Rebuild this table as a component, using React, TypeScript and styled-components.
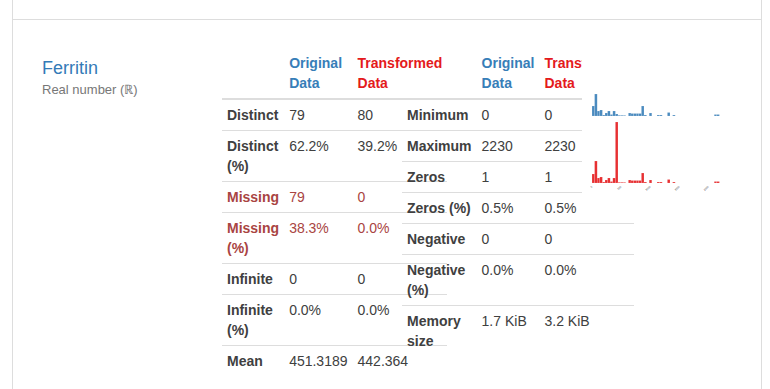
import React from "react";
import styled, { createGlobalStyle } from "styled-components";

const GlobalStyle = createGlobalStyle`
  html, body {
    margin: 0;
    padding: 0;
    background: #fff;
  }
  body {
    font-family: "Liberation Sans", Arial, Helvetica, sans-serif;
    font-size: 14px;
    line-height: 1.42857;
    color: #333;
  }
`;

const BLUE = "#377eb8";
const RED = "#e41a1c";
const TEXT = "#404040";

const Card = styled.div`
  margin-left: 12px;
  width: 750px;
  box-sizing: border-box;
  min-height: 100vh;
  border-left: 1px solid #ddd;
  border-right: 1px solid #ddd;
`;

const PrevItem = styled.div`
  height: 19px;
  border-bottom: 1px solid #ddd;
`;

const VariableRow = styled.div`
  display: flex;
  align-items: flex-start;
  padding-top: 28px;
  padding-bottom: 12px;
`;

const NameCol = styled.div`
  flex: none;
  width: 209px;
  box-sizing: border-box;
  padding-left: 29px;
`;

const VarName = styled.h4`
  margin: 10px 0 0;
  font-size: 18px;
  line-height: 20px;
  font-weight: 400;
  color: #337ab7;
`;

const VarType = styled.small`
  display: block;
  margin-top: 3px;
  font-size: 13px;
  line-height: 17px;
  color: #777;
`;

const TableCol = styled.div`
  flex: none;
  width: 180px;
  min-width: 0;
`;

const StatTable = styled.table`
  width: 100%;
  border-collapse: collapse;
  border-spacing: 0;
  font-size: 14px;
  line-height: 20px;
`;

const HeadCell = styled.th<{ $color?: string }>`
  padding: 5px;
  text-align: left;
  vertical-align: bottom;
  font-weight: 700;
  color: ${(p) => p.$color ?? TEXT};
  border-bottom: 2px solid #ddd;
`;

const Row = styled.tr<{ $alert?: boolean }>`
  color: ${(p) => (p.$alert ? "#a94442" : TEXT)};
  & > th,
  & > td {
    border-top: 1px solid #ddd;
  }
  &:first-child > th,
  &:first-child > td {
    border-top: 0;
  }
`;

const Label = styled.th`
  padding: 5px;
  text-align: left;
  vertical-align: top;
  font-weight: 700;
`;

const Value = styled.td`
  padding: 5px;
  text-align: left;
  vertical-align: top;
  white-space: nowrap;
`;

const ChartCol = styled.div`
  position: relative;
  flex: none;
  width: 165px;
  height: 148px;
  background: #fff;
`;

type StatRow = { label: string; a: string; b: string; alert?: boolean };

const leftRows: StatRow[] = [
  { label: "Distinct", a: "79", b: "80" },
  { label: "Distinct (%)", a: "62.2%", b: "39.2%" },
  { label: "Missing", a: "79", b: "0", alert: true },
  { label: "Missing (%)", a: "38.3%", b: "0.0%", alert: true },
  { label: "Infinite", a: "0", b: "0" },
  { label: "Infinite (%)", a: "0.0%", b: "0.0%" },
  { label: "Mean", a: "451.3189", b: "442.364" },
];

const rightRows: StatRow[] = [
  { label: "Minimum", a: "0", b: "0" },
  { label: "Maximum", a: "2230", b: "2230" },
  { label: "Zeros", a: "1", b: "1" },
  { label: "Zeros (%)", a: "0.5%", b: "0.5%" },
  { label: "Negative", a: "0", b: "0" },
  { label: "Negative (%)", a: "0.0%", b: "0.0%" },
  { label: "Memory size", a: "1.7 KiB", b: "3.2 KiB" },
];

const Stats: React.FC<{ rows: StatRow[] }> = ({ rows }) => (
  <StatTable>
    <thead>
      <tr>
        <HeadCell />
        <HeadCell $color={BLUE}>Original Data</HeadCell>
        <HeadCell $color={RED}>Transformed Data</HeadCell>
      </tr>
    </thead>
    <tbody>
      {rows.map((r) => (
        <Row key={r.label} $alert={r.alert}>
          <Label>{r.label}</Label>
          <Value>{r.a}</Value>
          <Value>{r.b}</Value>
        </Row>
      ))}
    </tbody>
  </StatTable>
);

const blueHeights = [
  10, 22, 5, 6, 1, 3, 5, 1.5, 5, 2, 0.7, 0.7, 0.6, 0, 3, 2.5, 2.5, 2.5, 2.5, 10,
  1, 0, 3, 0, 0, 1, 1, 0, 0, 3.5, 0, 1, 0, 0, 0, 0, 0, 0, 0, 0, 0, 0, 0, 0, 0, 0,
  0, 1.5, 1.5, 0,
];
const redHeights = blueHeights.map((h, i) => (i === 0 ? 9 : i === 9 ? 61 : h));

const BIN = 2.6;
const X0 = 10;

const Histogram: React.FC = () => (
  <svg width="165" height="148" viewBox="0 0 165 148">
    {blueHeights.map((h, i) =>
      h > 0 ? (
        <rect
          key={`b${i}`}
          x={X0 + i * BIN}
          y={68 - h}
          width={BIN}
          height={h}
          fill={BLUE}
          fillOpacity={0.9}
          stroke="#fff"
          strokeOpacity={0.35}
          strokeWidth={0.4}
        />
      ) : null
    )}
    {redHeights.map((h, i) =>
      h > 0 ? (
        <rect
          key={`r${i}`}
          x={X0 + i * BIN}
          y={135 - h}
          width={BIN}
          height={h}
          fill={RED}
          fillOpacity={0.9}
          stroke="#fff"
          strokeOpacity={0.35}
          strokeWidth={0.4}
        />
      ) : null
    )}
    {["0", "500", "1000", "1500", "2000"].map((t, k) => {
      const x = X0 + k * 29.1 + 0.5;
      return (
        <text
          key={t}
          x={x}
          y={139}
          fontSize={2.6}
          fill="#111"
          textAnchor="end"
          fontFamily="Liberation Sans, sans-serif"
          transform={`rotate(-45 ${x} 139)`}
        >
          {t}
        </text>
      );
    })}
  </svg>
);

export default function App() {
  return (
    <>
      <GlobalStyle />
      <Card>
        <PrevItem />
        <VariableRow>
          <NameCol>
            <VarName>Ferritin</VarName>
            <VarType>Real number (ℝ)</VarType>
          </NameCol>
          <TableCol>
            <Stats rows={leftRows} />
          </TableCol>
          <TableCol>
            <Stats rows={rightRows} />
          </TableCol>
          <ChartCol>
            <Histogram />
          </ChartCol>
        </VariableRow>
      </Card>
    </>
  );
}
